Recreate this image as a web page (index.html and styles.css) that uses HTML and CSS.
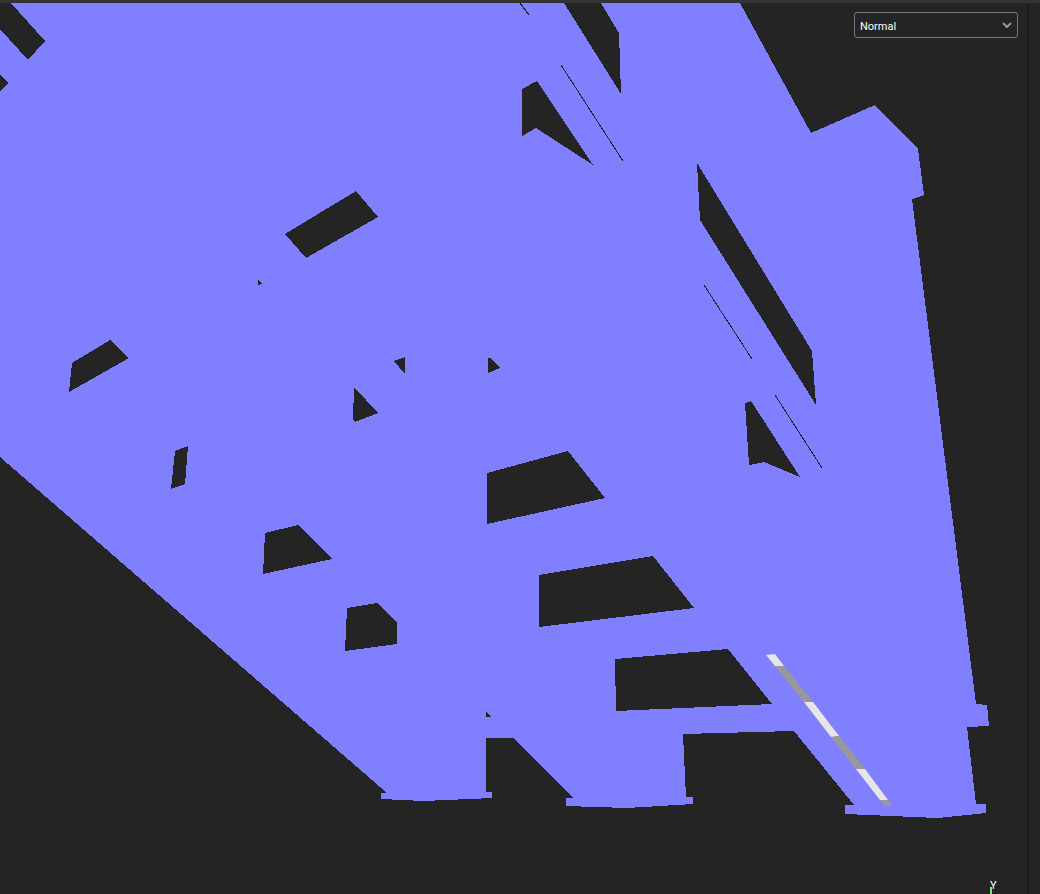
FILE: index.html
```
<!DOCTYPE html>
<html lang="en">
<head>
<meta charset="UTF-8">
<meta name="viewport" content="width=device-width, initial-scale=1.0">
<title>Viewport</title>
<link rel="stylesheet" href="styles.css">
</head>
<body>
<div class="topbar"></div>
<div class="workspace">
  <main class="viewport">
    <svg class="scene" viewBox="0 3 1027 891" preserveAspectRatio="xMinYMin slice" aria-hidden="true">
      <!-- mesh -->
      <g shape-rendering="crispEdges">
        <path class="mesh" d="M0 3H740L811 133L875 105L918 149L924 195L912 199L976 704L987 705L989 726L967 727L976 804H986V813L938 818L845 814V805H854L794 731L683 734L686 797H693V804L627 808L566 806V798H573L514 738H486V792H492V798L424 801L381 799V793H387L0 457Z"/>
        <!-- holes -->
        <g class="hole">
          <path d="M0 3H11L45 41L28 60L0 29Z"/>
          <path d="M0 74L8 83L0 92Z"/>
          <path d="M564 3H601L619 33L621 94Z"/>
          <path d="M522 89L537 81L593 165L536 128L522 136Z"/>
          <path d="M697 163L812 351L816 405L700 220Z"/>
          <path d="M745 403L751 401L800 477L764 462L749 465Z"/>
          <path d="M285 234L356 191L378 217L306 258Z"/>
          <path d="M258 280L262 284L258 285Z"/>
          <path d="M72 363L110 340L129 358L69 392Z"/>
          <path d="M394 361L405 357V374Z"/>
          <path d="M488 358H491L500 368L488 373Z"/>
          <path d="M354 387L378 413L355 422L353 419Z"/>
          <path d="M175 451L188 446L185 484L171 489Z"/>
          <path d="M487 473L568 451L605 498L487 524Z"/>
          <path d="M265 533L298 525L332 559L263 574Z"/>
          <path d="M347 608L377 603L397 623V644L345 651Z"/>
          <path d="M539 575L653 556L694 608L539 627Z"/>
          <path d="M615 659L728 649L772 704L616 711Z"/>
          <path d="M486 712L491 717H486Z"/>
        </g>
        <g class="seam">
          <path d="M520 3L529 15"/>
          <path d="M561 65L623 161"/>
          <path d="M704 285L752 359"/>
          <path d="M775 395L822 468"/>
        </g>
      </g>
      <!-- striped edge -->
      <path class="stripe-light" d="M766 655L775 654L784 666H775Z"/>
      <path class="stripe-dark" d="M775 666H784L813 702H804Z"/>
      <path class="stripe-light" d="M804 702H813L839 736L831 737Z"/>
      <path class="stripe-dark" d="M831 737L839 736L865 769H856Z"/>
      <path class="stripe-light" d="M856 769H865L888 800H880Z"/>
      <path class="stripe-dark" d="M880 800H888L893 806H885Z"/>
      <!-- axis -->
      <rect class="axis-line" x="990" y="887" width="2" height="7"/>
      <text class="axis-label" x="990" y="889">Y</text>
    </svg>
    <select class="channel" aria-label="Display channel">
      <option>Normal</option>
    </select>
    <svg class="chevron" viewBox="0 0 10 6" aria-hidden="true"><path d="M1 1L5 5L9 1"/></svg>
  </main>
  <aside class="side"></aside>
</div>
</body>
</html>
```
FILE: styles.css
```
body {
  margin: 0;
  min-height: 100vh;
  display: flex;
  flex-direction: column;
  background-color: #242424;
  color: #e6e6e6;
  font-family: Roboto, "Liberation Sans", Arial, sans-serif;
}

.topbar {
  height: 3px;
  background-color: #333333;
}

.workspace {
  flex: 1;
  display: grid;
  grid-template-columns: 1fr 13px;
}

.viewport {
  position: relative;
  overflow: hidden;
}

.side {
  border-left: 2px solid #1b1b1b;
}

/* 3D view */
.scene {
  position: absolute;
  top: 0;
  left: 0;
  width: 100%;
  height: 100%;
}

.mesh {
  fill: #8080ff;
}

.hole {
  fill: #242424;
}

.seam {
  fill: none;
  stroke: #242424;
  stroke-width: 1;
}

.stripe-light {
  fill: #e6e6e6;
}

.stripe-dark {
  fill: #999999;
}

.axis-line {
  fill: #80e680;
}

.axis-label {
  fill: #ffffff;
  font-size: 11px;
}

/* channel drop-down, over the view */
.channel {
  position: absolute;
  top: 9px;
  right: 9px;
  width: 164px;
  height: 26px;
  padding: 2px 24px 0 5px;
  border: 1px solid #767676;
  border-radius: 3px;
  background-color: #242424;
  color: #ffffff;
  font-family: inherit;
  font-size: 11px;
  appearance: none;
}

.chevron {
  position: absolute;
  top: 19px;
  right: 15px;
  width: 10px;
  height: 6px;
  fill: none;
  stroke: #999999;
  stroke-width: 2;
  pointer-events: none;
}
```
